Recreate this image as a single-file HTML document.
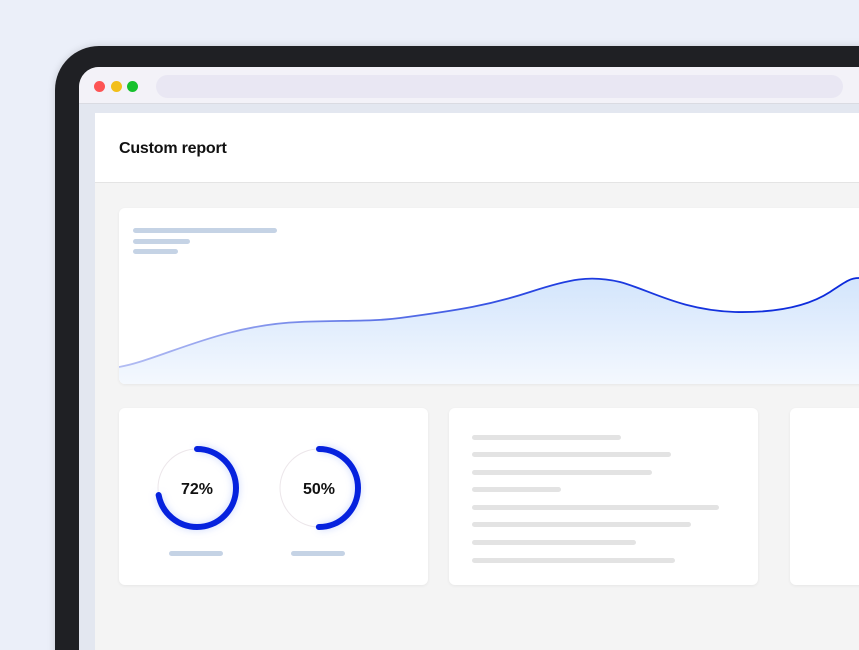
<!DOCTYPE html>
<html style="width:859px;height:650px;overflow:hidden"><head><style>
*{margin:0;padding:0;box-sizing:border-box}
body{width:859px;height:650px;overflow:hidden;background:#ebeff9;position:relative;font-family:"Liberation Sans",sans-serif}
.abs{position:absolute}
.frame{left:55px;top:46px;width:900px;height:700px;background:#1f2024;border-radius:44px;box-shadow:0 0 8px rgba(0,0,0,.15)}
.screen{left:79px;top:67px;width:900px;height:700px;background:#e3e7f0;border-radius:20px 0 0 0;overflow:hidden}
.bar{left:0;top:0;width:900px;height:37px;background:#f3f2f8;border-bottom:1px solid #dadbe2}
.dot{width:11px;height:11px;border-radius:50%;top:14px}
.addr{left:77px;top:8px;width:687px;height:23px;background:#e9e7f3;border-radius:12px}
.main{left:16px;top:46px;width:900px;height:700px;background:#f4f4f4}
.hdr{left:0;top:0;width:900px;height:70px;background:#fff;border-bottom:1px solid #e4e4e4}
.card{background:#fff;border-radius:6px;box-shadow:0 1px 3px rgba(0,0,0,.06)}
.l{height:5px;border-radius:3px;background:#c5d3e5}
.g{height:5px;border-radius:3px;background:#e3e3e3}
</style></head><body>
<div class="abs frame"></div>
<div class="abs screen">
  <div class="abs bar">
    <div class="abs dot" style="left:15px;background:#fd5454"></div>
    <div class="abs dot" style="left:32px;background:#f2bf19"></div>
    <div class="abs dot" style="left:48px;background:#16c12d"></div>
    <div class="abs addr"></div>
  </div>
  <div class="abs main">
    <div class="abs hdr"><div class="abs" style="left:24px;top:27px;font-size:16px;color:#111;font-weight:bold;letter-spacing:-0.2px">Custom report</div></div>
  </div>
</div>
<div class="abs card" style="left:119px;top:208px;width:760px;height:176px;overflow:hidden;border-radius:6px 0 0 6px">
  <div class="abs l" style="left:14px;top:20px;width:144px"></div>
  <div class="abs l" style="left:14px;top:31px;width:57px"></div>
  <div class="abs l" style="left:14px;top:41px;width:45px"></div>
  <svg class="abs" style="left:0;top:0" width="740" height="176" viewBox="119 208 740 176">
    <defs>
      <linearGradient id="f" x1="0" y1="0" x2="0" y2="1"><stop offset="0" stop-color="#d3e5fc"/><stop offset="1" stop-color="#f4f8fe"/></linearGradient>
      <linearGradient id="s" x1="0" y1="0" x2="1" y2="0"><stop offset="0" stop-color="#b3bdf3"/><stop offset=".3" stop-color="#6a7fe8"/><stop offset=".6" stop-color="#1f3de0"/><stop offset="1" stop-color="#0a28db"/></linearGradient>
    </defs>
    <path d="M119 367 C160 360 220 325 300 322 C340 320 370 322 400 318 C460 310 490 305 530 292 C570 279 590 275 620 282 C650 290 680 310 735 312 C780 313 810 305 830 292 C845 282 850 278 859 278 L859 384 L119 384Z" fill="url(#f)"/>
    <path d="M119 367 C160 360 220 325 300 322 C340 320 370 322 400 318 C460 310 490 305 530 292 C570 279 590 275 620 282 C650 290 680 310 735 312 C780 313 810 305 830 292 C845 282 850 278 859 278" fill="none" stroke="url(#s)" stroke-width="1.8"/>
  </svg>
</div>
<div class="abs card" style="left:119px;top:408px;width:309px;height:177px">
  <svg class="abs" style="left:0;top:0" width="309" height="177">
    <defs><filter id="gl" x="-50%" y="-50%" width="200%" height="200%"><feGaussianBlur stdDeviation="4"/></filter></defs>
    <circle cx="78" cy="80" r="39" fill="none" stroke="#ece6ea" stroke-width="1"/>
    <circle cx="78" cy="80" r="39" fill="none" stroke="#a9bdfb" stroke-width="6" stroke-dasharray="176.4 245" transform="rotate(-90 78 80)" filter="url(#gl)" opacity=".6"/>
    <circle cx="78" cy="80" r="39" fill="none" stroke="#0622de" stroke-width="6" stroke-linecap="round" stroke-dasharray="176.4 245" transform="rotate(-90 78 80)"/>
    <text x="78" y="86" text-anchor="middle" font-family="Liberation Sans" font-size="16" font-weight="bold" fill="#111">72%</text>
    <circle cx="200" cy="80" r="39" fill="none" stroke="#ece6ea" stroke-width="1"/>
    <circle cx="200" cy="80" r="39" fill="none" stroke="#a9bdfb" stroke-width="6" stroke-dasharray="122.5 245" transform="rotate(-90 200 80)" filter="url(#gl)" opacity=".6"/>
    <circle cx="200" cy="80" r="39" fill="none" stroke="#0622de" stroke-width="6" stroke-linecap="round" stroke-dasharray="122.5 245" transform="rotate(-90 200 80)"/>
    <text x="200" y="86" text-anchor="middle" font-family="Liberation Sans" font-size="16" font-weight="bold" fill="#111">50%</text>
  </svg>
  <div class="abs l" style="left:50px;top:143px;width:54px"></div>
  <div class="abs l" style="left:172px;top:143px;width:54px"></div>
</div>
<div class="abs card" style="left:449px;top:408px;width:309px;height:177px">
  <div class="abs g" style="left:23px;top:27px;width:149px"></div>
  <div class="abs g" style="left:23px;top:44px;width:199px"></div>
  <div class="abs g" style="left:23px;top:62px;width:180px"></div>
  <div class="abs g" style="left:23px;top:79px;width:89px"></div>
  <div class="abs g" style="left:23px;top:97px;width:247px"></div>
  <div class="abs g" style="left:23px;top:114px;width:219px"></div>
  <div class="abs g" style="left:23px;top:132px;width:164px"></div>
  <div class="abs g" style="left:23px;top:150px;width:203px"></div>
</div>
<div class="abs card" style="left:790px;top:408px;width:100px;height:177px"></div>
</body></html>
